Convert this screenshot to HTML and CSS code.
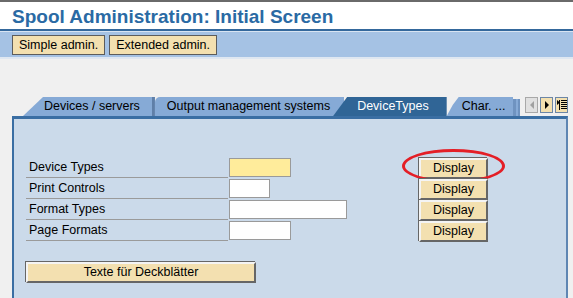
FILE: index.html
```html
<!DOCTYPE html>
<html lang="en">

<head>
    <meta charset="UTF-8">
    <title>Spool Administration: Initial Screen</title>
    <link rel="stylesheet" href="styles.css">
</head>

<body>
    <div class="title-bar">
        <h1>Spool Administration: Initial Screen</h1>
    </div>
    <div class="toolbar">
        <button class="sap-btn">Simple admin.</button>
        <button class="sap-btn">Extended admin.</button>
    </div>

    <div class="main">
        <div class="tab-strip">
            <div class="tab first">Devices / servers</div>
            <div class="tab second">Output management systems</div>
            <div class="tab active">DeviceTypes</div>
            <div class="tab last">Char. ...</div>
            <div class="tab-stack"></div>
            <div class="tab-nav">
                <span class="nav-btn disabled">
                    <svg width="6" height="8" viewBox="0 0 6 8"><path d="M5 0 L1 4 L5 8 Z" fill="#a0a0a0"/></svg>
                </span>
                <span class="nav-btn">
                    <svg width="6" height="8" viewBox="0 0 6 8"><path d="M1 0 L5 4 L1 8 Z" fill="#000"/></svg>
                </span>
                <span class="nav-btn">
                    <svg width="10" height="12" viewBox="0 0 10 12">
                        <path d="M0 1 L3 3.5 L0 6 Z" fill="#000"/>
                        <rect x="4" y="1" width="6" height="1" fill="#000"/>
                        <rect x="4" y="3" width="6" height="1" fill="#000"/>
                        <rect x="4" y="5" width="6" height="1" fill="#000"/>
                        <rect x="4" y="7" width="6" height="1" fill="#000"/>
                        <rect x="4" y="9" width="6" height="1" fill="#000"/>
                        <rect x="2" y="1" width="1" height="10" fill="#000"/>
                    </svg>
                </span>
            </div>
        </div>

        <div class="panel">
            <div class="form-rows">
                <div class="row">
                    <label class="field-label">Device Types</label>
                    <div class="field-cell"><input class="field focus w60" type="text"></div>
                    <div class="btn-cell">
                        <button class="sap-btn display">Display</button>
                        <span class="marker"></span>
                    </div>
                </div>
                <div class="row">
                    <label class="field-label">Print Controls</label>
                    <div class="field-cell"><input class="field w40" type="text"></div>
                    <div class="btn-cell"><button class="sap-btn display">Display</button></div>
                </div>
                <div class="row">
                    <label class="field-label">Format Types</label>
                    <div class="field-cell"><input class="field w117" type="text"></div>
                    <div class="btn-cell"><button class="sap-btn display">Display</button></div>
                </div>
                <div class="row">
                    <label class="field-label">Page Formats</label>
                    <div class="field-cell"><input class="field w60" type="text"></div>
                    <div class="btn-cell"><button class="sap-btn display">Display</button></div>
                </div>
            </div>
            <button class="sap-btn wide">Texte für Deckblätter</button>
        </div>
    </div>
</body>

</html>
```

FILE: styles.css
```css
body {
    margin: 0;
    font-family: 'Liberation Sans', Arial, sans-serif;
    font-size: 12.5px;
    color: #000;
    background-color: #f0f0f0;
    height: 298px;
    overflow: hidden;
}

.title-bar {
    background-color: #fff;
    border-top: 2px solid #6a6a6a;
    border-bottom: 2px solid #34689c;
    height: 31px;
    box-sizing: border-box;
}

h1 {
    margin: 0;
    padding: 4px 0 0 12px;
    font-size: 19px;
    font-weight: bold;
    color: #2a6aa4;
    line-height: 22px;
}

.toolbar {
    background-color: #a5c2e4;
    border-top: 1px solid #d8e4f2;
    border-bottom: 2px solid #dfe7f1;
    height: 28px;
    box-sizing: border-box;
    padding: 3px 0 0 12px;
    display: flex;
    gap: 4px;
}

.sap-btn {
    font-family: inherit;
    font-size: 12.5px;
    color: #000;
    background-color: #f3e0b0;
    padding: 0 6px;
    height: 21px;
    line-height: 17px;
    cursor: pointer;
}

.toolbar .sap-btn {
    border: 1px solid #5c5c5c;
    height: 20px;
    padding: 0 6px;
}

.main {
    padding: 38px 5px 0 12px;
}

.tab-strip {
    display: flex;
    align-items: flex-end;
    height: 19px;
}

.tab {
    height: 19px;
    line-height: 18px;
    background-color: #86aad6;
    color: #000;
    white-space: nowrap;
    box-sizing: border-box;
}

.tab.first {
    margin-left: 11px;
    padding: 0 12px 0 21px;
    clip-path: polygon(0 100%, 20px 0, 100% 0, 100% 100%);
    border-right: 3px solid #5f7fa8;
}

.tab.second {
    padding: 0 14px 0 12px;
    border-radius: 5px 0 0 0;
}

.tab.active {
    margin-left: -11px;
    padding: 0 18px 0 24px;
    background-color: #306596;
    color: #fff;
    clip-path: polygon(0 100%, 14px 0, 100% 0, 100% 100%);
}

.tab.last {
    padding: 0 8px 0 15px;
    clip-path: polygon(0 100%, 6px 8px, 12px 0, 100% 0, 100% 100%);
}

.tab-stack {
    width: 13px;
    height: 17px;
    background: linear-gradient(to right, #6f93c0 0 3px, #86aad6 3px 5px, #6f93c0 5px 8px, #86aad6 8px 10px, #6f93c0 10px 13px);
}

.tab-nav {
    display: flex;
    gap: 2px;
    margin-left: 5px;
    margin-bottom: 3px;
}

.nav-btn {
    width: 11px;
    height: 14px;
    border: 1px solid #6c86a6;
    background-color: #f3e0b0;
    display: flex;
    align-items: center;
    justify-content: center;
}

.nav-btn.disabled {
    background-color: #e0e0e0;
    border-color: #a8a8a8;
}

.panel {
    background-color: #cbdaea;
    border: 2px solid #3a6ea3;
    border-top-width: 3px;
    border-bottom: none;
    border-right-color: #5f86b3;
    height: 190px;
    box-sizing: border-box;
    padding: 39px 0 0 12px;
}

.form-rows {
    display: flex;
    flex-direction: column;
    margin-bottom: 20px;
}

.row {
    display: flex;
    height: 21px;
}

.field-label {
    width: 202px;
    height: 20px;
    line-height: 19px;
    padding-left: 3px;
    box-sizing: border-box;
    border-bottom: 1px solid #9a9a9a;
}

.field-cell {
    width: 191px;
    display: flex;
}

.field {
    height: 19px;
    box-sizing: border-box;
    border: 1px solid #9a9a9a;
    background-color: #fff;
    padding: 0;
    margin: 0 0 0 1px;
}

.field.focus {
    background-color: #ffec9b;
}

.w40 { width: 41px; }
.w60 { width: 62px; }
.w117 { width: 118px; }

.btn-cell {
    position: relative;
    display: flex;
}

.sap-btn.display,
.sap-btn.wide {
    border: 2px solid #666;
    border-top-color: #f4f4f4;
    border-left-color: #f4f4f4;
    box-shadow: -1px -1px 0 #666;
    padding: 0;
}

.sap-btn.display {
    width: 69px;
}

.marker {
    position: absolute;
    left: -17px;
    top: -9px;
    width: 103px;
    height: 34px;
    box-sizing: border-box;
    border: 3px solid #e41e26;
    border-radius: 50%;
    pointer-events: none;
}

.sap-btn.wide {
    width: 230px;
}
```
